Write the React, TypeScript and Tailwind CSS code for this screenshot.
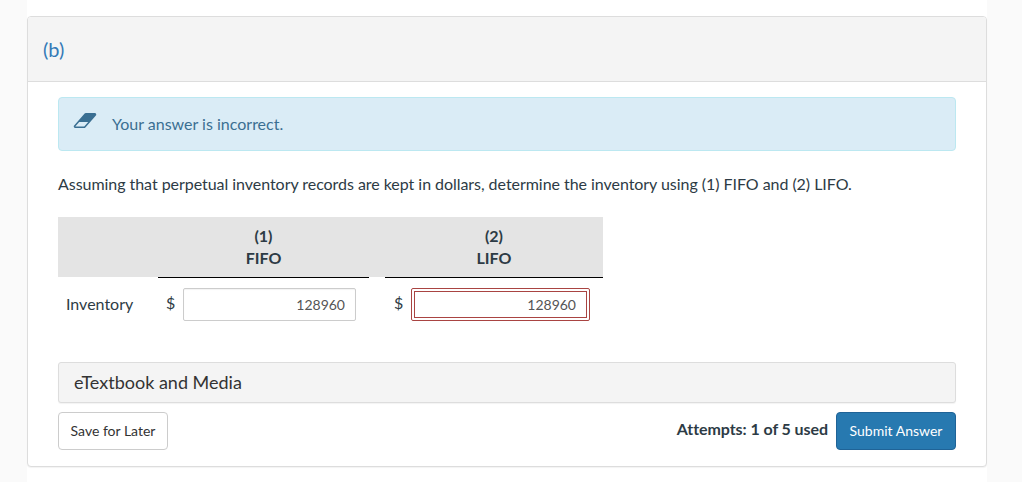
import { useState } from 'react'

type Answer = {
  id: string
  label: string
  method: string
  value: string
  incorrect: boolean
}

const initialAnswers: Answer[] = [
  { id: 'fifo', label: '(1)', method: 'FIFO', value: '128960', incorrect: false },
  { id: 'lifo', label: '(2)', method: 'LIFO', value: '128960', incorrect: true },
]

function EraserIcon() {
  return (
    <svg viewBox="0 0 2048 1792" className="h-[21px] w-6 shrink-0" fill="currentColor" aria-hidden="true">
      <path d="M960 1408l336-384h-768l-336 384h768zm1013-1077q15 34 9.5 71.5t-30.5 65.5l-896 1024q-38 44-96 44h-768q-38 0-69.500-20.500t-47.500-54.500q-15-34-9.500-71.500t30.500-65.500l896-1024q38-44 96-44h768q38 0 69.500 20.500t47.500 54.500z" />
    </svg>
  )
}

function IncorrectAlert() {
  return (
    <div className="flex h-[54px] rounded border border-[#bce8f1] bg-[#daecf6] pl-[14px] text-[#3a6f92]">
      <div className="pt-3">
        <EraserIcon />
      </div>
      <p className="ml-[15px] pt-[14px] text-base leading-[23px]">Your answer is incorrect.</p>
    </div>
  )
}

type AmountInputProps = {
  answer: Answer
  onChange: (value: string) => void
}

function AmountInput({ answer, onChange }: AmountInputProps) {
  return (
    <div className="flex items-center">
      <span className="w-[17px] pb-[3px] text-base leading-[22px]">$</span>
      <div
        className={
          answer.incorrect
            ? 'h-[33px] w-[179px] rounded-[2px] border border-[#a94442] p-[2px]'
            : 'h-[33px] w-[173px]'
        }
      >
        <input
          type="text"
          aria-label={answer.method}
          value={answer.value}
          onChange={(e) => onChange(e.target.value)}
          className={
            answer.incorrect
              ? 'block h-full w-full border border-[#a94442] bg-white pr-[10px] text-right text-sm text-[#555] outline-none'
              : 'block h-full w-full rounded-[2px] border border-[#ccc] bg-white pr-[10px] text-right text-sm text-[#555] shadow-[inset_0_1px_1px_rgba(0,0,0,0.05)] outline-none'
          }
        />
      </div>
    </div>
  )
}

export default function App() {
  const [answers, setAnswers] = useState<Answer[]>(initialAnswers)

  const updateAnswer = (id: string, value: string) => {
    setAnswers(answers.map((a) => (a.id === id ? { ...a, value } : a)))
  }

  return (
    <div className="h-[482px] bg-[#fafafa] pl-[27px] font-[Lato,sans-serif] text-[#2d3b45]">
      <main className="h-full w-[960px] bg-white pt-4">
        <section className="h-[451px] rounded border border-[#ddd] bg-white shadow-[0_1px_1px_rgba(0,0,0,0.05)]">
          <header className="flex h-[65px] items-center rounded-t-[3px] border-b border-[#ddd] bg-[#f4f4f4] pl-[15px]">
            <h2 className="text-xl text-[#337ab7]">(b)</h2>
          </header>

          <div className="px-[30px] pt-[15px]">
            <IncorrectAlert />

            <p className="mt-[21px] text-base leading-[23px] tracking-[-0.045px]">
              Assuming that perpetual inventory records are kept in dollars, determine the inventory using (1) FIFO and
              (2) LIFO.
            </p>

            <div className="mt-[22px] grid w-[545px] grid-cols-[100px_211px_16px_218px] text-base leading-[22px]">
              <div className="h-[60px] bg-[#e4e4e4]" />
              <div className="h-[61px] border-b border-black bg-[#e4e4e4] pt-2 text-center font-bold">
                {answers[0].label}
                <br />
                {answers[0].method}
              </div>
              <div className="h-[60px] bg-[#e4e4e4]" />
              <div className="h-[61px] border-b border-black bg-[#e4e4e4] pt-2 text-center font-bold">
                {answers[1].label}
                <br />
                {answers[1].method}
              </div>

              <div className="flex h-[53px] items-center pb-[2px] pl-2">Inventory</div>
              <div className="flex items-center pl-2">
                <AmountInput answer={answers[0]} onChange={(value) => updateAnswer(answers[0].id, value)} />
              </div>
              <div />
              <div className="flex items-center pl-[9px]">
                <AmountInput answer={answers[1]} onChange={(value) => updateAnswer(answers[1].id, value)} />
              </div>
            </div>

            <button
              type="button"
              className="mt-[31px] block h-[41px] w-full rounded-[3px] border border-[#ddd] bg-[#f4f4f4] pl-[15px] text-left text-lg leading-[39px] text-[#333] shadow-[0_1px_1px_rgba(0,0,0,0.05)]"
            >
              eTextbook and Media
            </button>

            <div className="mt-[9px] flex items-start justify-between">
              <button
                type="button"
                className="h-[38px] w-[110px] rounded border border-[#ccc] bg-white text-sm text-[#333]"
              >
                Save for Later
              </button>
              <div className="flex">
                <span className="mr-2 pt-[5px] text-base leading-[23px] font-bold tracking-[-0.07px]">
                  Attempts: 1 of 5 used
                </span>
                <button
                  type="button"
                  className="h-[38px] w-[120px] rounded border border-[#1f6397] bg-[#2779b0] text-sm text-white"
                >
                  Submit Answer
                </button>
              </div>
            </div>
          </div>
        </section>
      </main>
    </div>
  )
}
